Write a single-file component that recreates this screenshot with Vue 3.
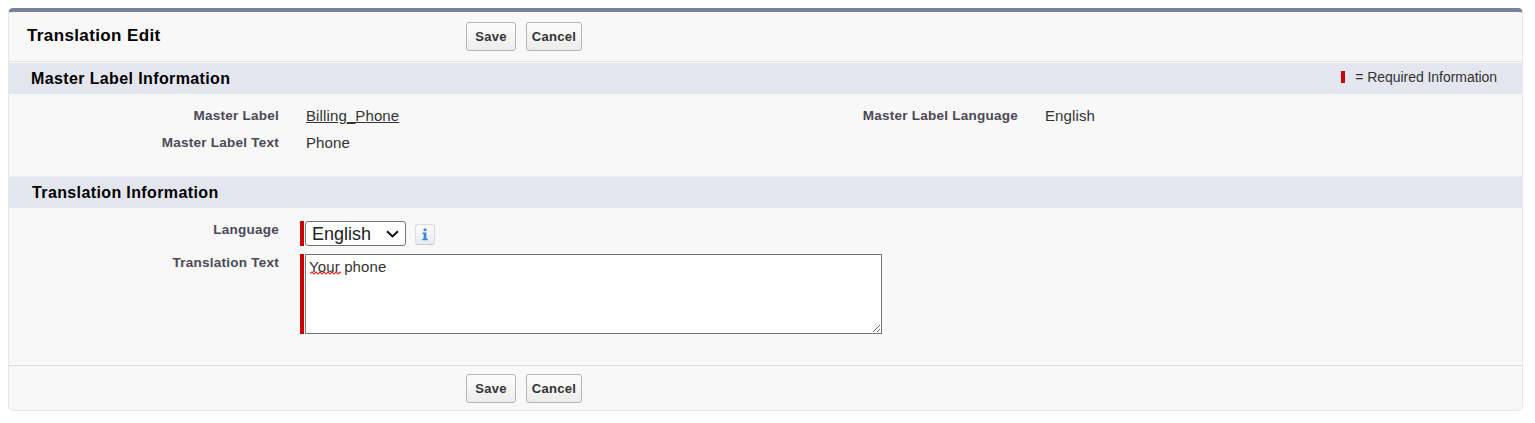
<script setup>
const masterRows = [
  { label: 'Master Label', value: 'Billing_Phone', link: true, label2: 'Master Label Language', value2: 'English' },
  { label: 'Master Label Text', value: 'Phone' },
]
</script>

<template>
  <div class="page">
    <div class="panel">
      <div class="button-row top">
        <h2 class="main-title">Translation Edit</h2>
        <div class="buttons">
          <button class="btn">Save</button>
          <button class="btn">Cancel</button>
        </div>
      </div>

      <div class="section-head first">
        <h3>Master Label Information</h3>
        <span class="legend"><i class="req-mark"></i>= Required Information</span>
      </div>
      <div class="master-body">
        <div class="info-row" v-for="row in masterRows" :key="row.label">
          <span class="label">{{ row.label }}</span>
          <span class="value" :class="{ link: row.link }">{{ row.value }}</span>
          <span class="label">{{ row.label2 }}</span>
          <span class="value">{{ row.value2 }}</span>
        </div>
      </div>

      <div class="section-head second">
        <h3>Translation Information</h3>
      </div>
      <div class="edit-body">
        <div class="edit-row lang-row">
          <span class="label">Language</span>
          <div class="required-input select-wrap">
            <select class="lang-select">
              <option>English</option>
            </select>
            <svg class="chevron" width="13" height="8" viewBox="0 0 13 8">
              <path d="M1 1.2L6.5 6.4L12 1.2" fill="none" stroke="#111" stroke-width="2" />
            </svg>
          </div>
          <span class="info-btn">
            <svg width="10" height="13" viewBox="0 0 10 13">
              <rect x="3.6" y="0.5" width="2.8" height="2.6" fill="#3f87d8" />
              <path d="M2.5 4.6H6.4V10.8H7.8V12.3H2.2V10.8H3.6V6.1H2.5Z" fill="#3f87d8" />
            </svg>
          </span>
        </div>
        <div class="edit-row">
          <span class="label">Translation Text</span>
          <div class="required-input text-wrap">
            <textarea class="text-input" spellcheck="false">Your phone</textarea>
            <svg class="squiggle" width="31" height="4" viewBox="0 0 31 4">
              <path d="M0 2.5 L2 1 L4 3 L6 1 L8 3 L10 1 L12 3 L14 1 L16 3 L18 1 L20 3 L22 1 L24 3 L26 1 L28 3 L30 1 L31 2" fill="none" stroke="#e0302c" stroke-width="1.2" />
            </svg>
          </div>
        </div>
      </div>

      <div class="button-row bottom">
        <div class="buttons">
          <button class="btn">Save</button>
          <button class="btn">Cancel</button>
        </div>
      </div>
    </div>
  </div>
</template>

<style>
html, body {
  background: #fff;
}
</style>

<style scoped>
.page {
  padding: 8px 12px 12px 8px;
  font-family: "Liberation Sans", Arial, sans-serif;
}

.panel {
  height: 403px;
  box-sizing: border-box;
  background: #f8f8f8;
  border: 1px solid #e6e6e6;
  border-top: 4px solid #78829e;
  border-radius: 5px;
  display: flex;
  flex-direction: column;
}

.button-row {
  display: flex;
  align-items: center;
  flex-shrink: 0;
}

.button-row.top {
  height: 49px;
  border-bottom: 1px solid #e2e2e2;
}

.button-row.bottom {
  height: 44px;
  box-sizing: content-box;
  margin-top: auto;
  border-top: 1px solid #dcdcdc;
  padding-left: 457px;
  align-items: flex-start;
}

.button-row.bottom .buttons {
  margin-top: 8px;
}

.main-title {
  margin: -2px 0 0;
  width: 457px;
  padding-left: 18px;
  box-sizing: border-box;
  flex-shrink: 0;
  font-size: 17px;
  font-weight: 700;
  color: #000;
  letter-spacing: 0.38px;
}

.buttons {
  display: flex;
  gap: 10px;
}

.btn {
  height: 29px;
  padding: 0;
  border: 1px solid #b5b5b5;
  border-radius: 3px;
  background: linear-gradient(#fdfdfd, #ececec);
  color: #333;
  font-family: inherit;
  font-size: 13px;
  font-weight: 700;
  letter-spacing: 0.3px;
}

.btn:first-child {
  width: 50px;
}

.btn:last-child {
  width: 56px;
}

.section-head {
  display: flex;
  justify-content: space-between;
  align-items: center;
  height: 31px;
  background: #e3e6ef;
  flex-shrink: 0;
}

.section-head.first {
  margin-top: 1px;
  padding: 0 25px 0 22px;
}

.section-head.second {
  padding-left: 23px;
  border-top: 1px solid #eeeeee;
}

.section-head h3 {
  margin: 0;
  font-size: 16px;
  font-weight: 700;
  color: #000;
  letter-spacing: 0.38px;
}

.legend {
  display: flex;
  align-items: center;
  font-size: 14px;
  letter-spacing: -0.05px;
  color: #333;
  margin-top: -3px;
}

.req-mark {
  width: 4px;
  height: 12px;
  background: #c00;
  margin-right: 10px;
}

.master-body {
  height: 82px;
  padding-top: 8px;
  box-sizing: border-box;
}

.info-row {
  display: grid;
  grid-template-columns: 270px 27px 445px 267px 27px auto;
  height: 27px;
  align-items: center;
}

.info-row .label:nth-child(1) {
  grid-column: 1;
}

.info-row .value:nth-child(2) {
  grid-column: 3;
}

.info-row .label:nth-child(3) {
  grid-column: 4;
}

.info-row .value:nth-child(4) {
  grid-column: 6;
}

.label {
  text-align: right;
  font-size: 13.5px;
  font-weight: 700;
  color: #4a4a56;
  letter-spacing: 0.25px;
}

.value {
  font-size: 15px;
  color: #333;
  letter-spacing: 0.12px;
}

.value.link {
  color: #333;
  text-decoration: underline;
}

.edit-body {
  padding-top: 13px;
}

.edit-row {
  display: flex;
  align-items: flex-start;
}

.edit-row .label {
  width: 270px;
  flex-shrink: 0;
  padding-top: 1px;
}

.lang-row {
  height: 33px;
}

.required-input {
  margin-left: 21px;
  border-left: 4px solid #c00;
  padding-left: 1px;
  display: flex;
}

.text-wrap,
.select-wrap {
  position: relative;
}

.lang-select {
  width: 101px;
  height: 25px;
  box-sizing: border-box;
  appearance: none;
  font-family: inherit;
  font-size: 18px;
  color: #222;
  background: #fff;
  border: 1px solid #767676;
  border-radius: 3px;
  padding: 0 6px;
  outline: none;
}

.chevron {
  position: absolute;
  right: 7px;
  top: 9px;
  pointer-events: none;
}

.info-btn {
  width: 20px;
  height: 21px;
  box-sizing: border-box;
  margin: 3px 0 0 9px;
  display: flex;
  align-items: center;
  justify-content: center;
  background: linear-gradient(#fbfcfe, #e8ebf0);
  border: 1px solid #dcdcdc;
  border-bottom-color: #c8c8c8;
  border-radius: 3px;
}

.text-input {
  display: block;
  width: 577px;
  height: 80px;
  box-sizing: border-box;
  margin: 0;
  padding: 3px;
  border: 1px solid #767676;
  border-radius: 0;
  outline: none;
  background: #fff;
  color: #333;
  font-family: inherit;
  font-size: 15px;
  letter-spacing: 0.13px;
}

.squiggle {
  position: absolute;
  left: 6px;
  top: 17px;
}
</style>
